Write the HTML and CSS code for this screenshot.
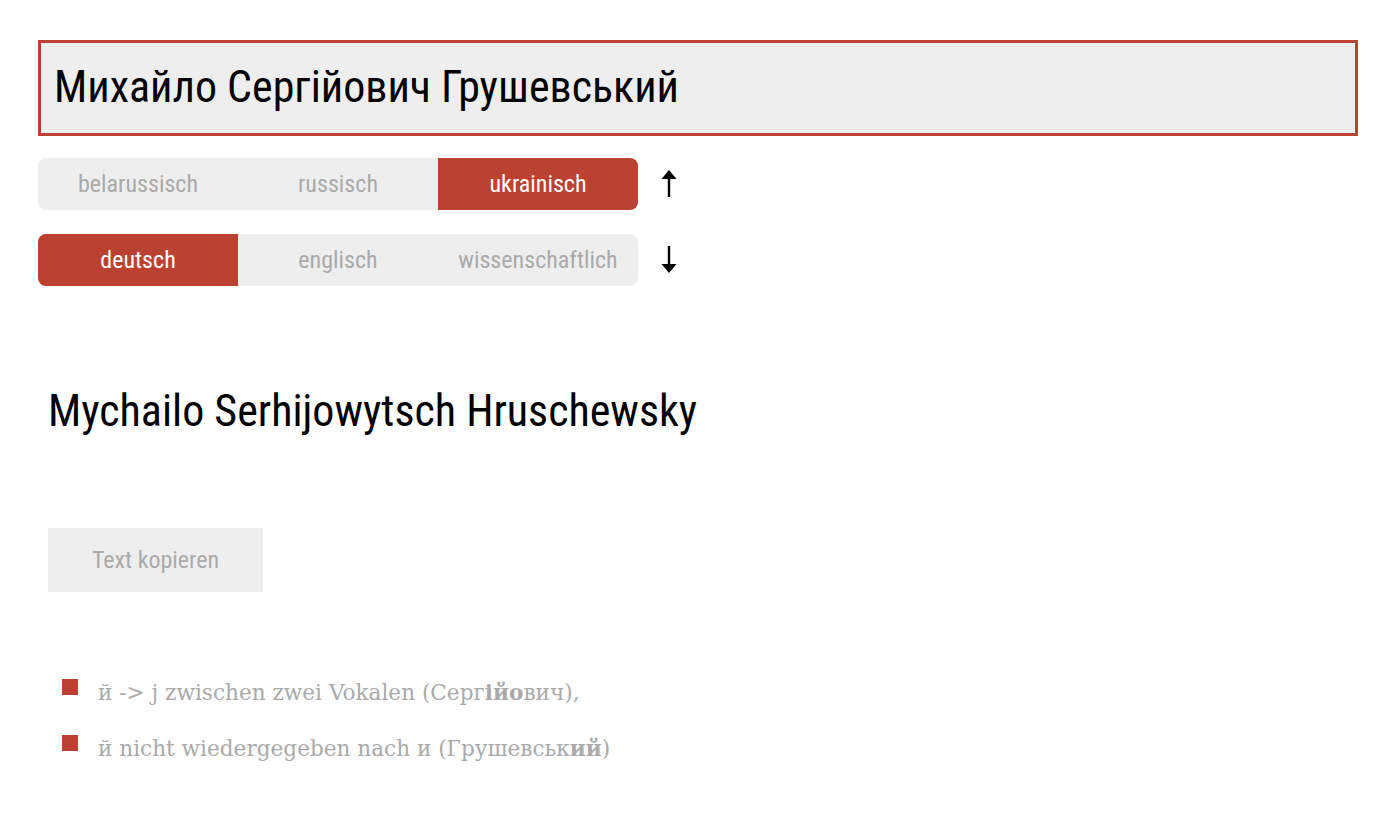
FILE: index.html
```html
<!DOCTYPE html>
<html lang="de">
<head>
<meta charset="utf-8">
<title>Transliteration</title>
<link rel="stylesheet" href="styles.css">
</head>
<body>
<main class="page">
  <div class="input-box">Михайло Сергійович Грушевський</div>

  <div class="selector-row">
    <div class="segmented">
      <span class="seg">belarussisch</span>
      <span class="seg">russisch</span>
      <span class="seg active">ukrainisch</span>
    </div>
    <svg class="arrow" width="16" height="28" viewBox="0 0 16 28" aria-hidden="true">
      <polygon points="8,0 15.5,9 0.5,9" fill="#000"/>
      <rect x="6.8" y="8" width="2.4" height="19" fill="#000"/>
    </svg>
  </div>

  <div class="selector-row">
    <div class="segmented">
      <span class="seg active">deutsch</span>
      <span class="seg">englisch</span>
      <span class="seg">wissenschaftlich</span>
    </div>
    <svg class="arrow" width="16" height="28" viewBox="0 0 16 28" aria-hidden="true">
      <polygon points="8,27 15.5,18 0.5,18" fill="#000"/>
      <rect x="6.8" y="0" width="2.4" height="19" fill="#000"/>
    </svg>
  </div>

  <div class="output">Mychailo Serhijowytsch Hruschewsky</div>

  <button class="copy-btn">Text kopieren</button>

  <ul class="rules">
    <li>й -&gt; j zwischen zwei Vokalen (Серг<b>ійо</b>вич),</li>
    <li>й nicht wiedergegeben nach и (Грушевськ<b>ий</b>)</li>
  </ul>
</main>
</body>
</html>
```

FILE: styles.css
```css
* { box-sizing: border-box; }
html, body { margin: 0; padding: 0; background: #fff; }
body {
  font-family: "Roboto Condensed", "Roboto", sans-serif;
  font-stretch: condensed;
}
.page {
  padding: 40px 42px 0 38px;
}
.input-box {
  height: 96px;
  border: 3px solid #bb4133;
  background: #eeeeee;
  font-size: 44px;
  color: #000;
  display: flex;
  align-items: center;
  padding-left: 13px;
  padding-bottom: 2px;
}
.selector-row {
  display: flex;
  align-items: center;
  margin-top: 22px;
}
.selector-row + .selector-row { margin-top: 24px; }
.segmented {
  display: flex;
  width: 600px;
  height: 52px;
  background: #eeeeee;
  border-radius: 8px;
  overflow: hidden;
}
.seg {
  flex: 1;
  display: flex;
  align-items: center;
  justify-content: center;
  font-size: 24px;
  color: #aaaaaa;
  padding-bottom: 1px;
}
.seg.active {
  background: #bb4133;
  color: #fff;
}
.arrow {
  margin-left: 23px;
  display: block;
}
.output {
  margin-top: 99px;
  margin-left: 10px;
  font-size: 44px;
  line-height: 52px;
  color: #000;
}
.copy-btn {
  display: block;
  margin-top: 91px;
  margin-left: 10px;
  width: 215px;
  height: 64px;
  border: none;
  background: #eeeeee;
  color: #aaaaaa;
  font-family: "Roboto Condensed", "Roboto", sans-serif;
  font-stretch: condensed;
  font-size: 24px;
  padding: 0 0 1px;
}
.rules {
  list-style: none;
  margin: 84px 0 0 24px;
  padding: 0;
  font-family: "DejaVu Serif", serif;
  font-stretch: normal;
  font-size: 21.6px;
  color: #aaaaaa;
}
.rules li {
  display: flex;
  align-items: center;
  height: 32px;
  margin-bottom: 24px;
}
.rules li::before {
  content: "";
  width: 16px;
  height: 16px;
  background: #bb4133;
  margin-right: 20px;
  margin-top: -10px;
  flex: none;
}
.rules b { font-weight: bold; }
```
